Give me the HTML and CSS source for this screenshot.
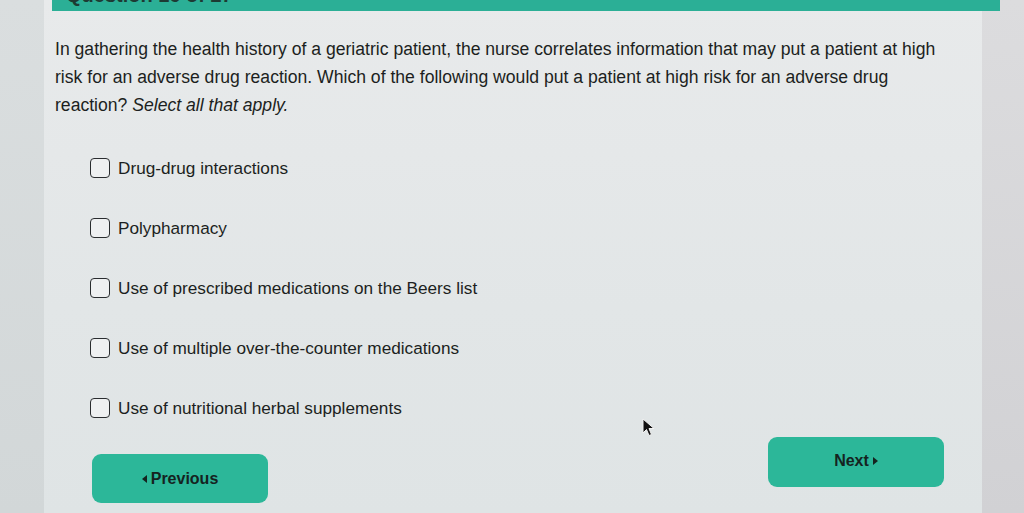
FILE: index.html
```html
<!DOCTYPE html>
<html lang="en">
<head>
<meta charset="utf-8">
<title>Question</title>
<link rel="stylesheet" href="styles.css">
</head>
<body>
<div class="screen">
  <div class="gutter gutter-left"></div>
  <main class="panel">
    <header class="topbar"><span class="topbar-title">Question 16 of 27</span></header>
    <p class="question">In gathering the health history of a geriatric patient, the nurse correlates information that may put a patient at high<br>risk for an adverse drug reaction. Which of the following would put a patient at high risk for an adverse drug<br>reaction? <em>Select all that apply.</em></p>
    <ul class="options">
      <li class="option"><span class="box"></span><span class="label">Drug-drug interactions</span></li>
      <li class="option"><span class="box"></span><span class="label">Polypharmacy</span></li>
      <li class="option"><span class="box"></span><span class="label">Use of prescribed medications on the Beers list</span></li>
      <li class="option"><span class="box"></span><span class="label">Use of multiple over-the-counter medications</span></li>
      <li class="option"><span class="box"></span><span class="label">Use of nutritional herbal supplements</span></li>
    </ul>
    <div class="nav">
      <button class="btn btn-prev"><span class="tri tri-left"></span>Previous</button>
      <button class="btn btn-next">Next<span class="tri tri-right"></span></button>
    </div>
    <svg class="cursor" width="14" height="20" viewBox="0 0 14 20"><path d="M1 1 L1 15 L4.5 11.5 L7 17.5 L9.5 16.5 L7 10.5 L12 10.5 Z" fill="#111" stroke="#f2f2f2" stroke-width="1"/></svg>
  </main>
  <div class="gutter gutter-right"></div>
</div>
</body>
</html>
```

FILE: styles.css
```css
* { box-sizing: border-box; }
html, body {
  margin: 0;
  padding: 0;
  height: 100%;
}
body {
  background: #d7dbdc;
  font-family: "Liberation Sans", Arial, Helvetica, sans-serif;
  color: #1c1f21;
  overflow: hidden;
}
.screen {
  display: flex;
  width: 1024px;
  height: 513px;
}
.gutter {
  flex: 0 0 auto;
}
.gutter-left {
  width: 44px;
  background: linear-gradient(180deg, #dadedf 0%, #d2d7d8 100%);
}
.gutter-right {
  width: 42px;
  background: linear-gradient(180deg, #dcdcde 0%, #d1d1d4 100%);
}
.panel {
  flex: 1 1 auto;
  position: relative;
  background: linear-gradient(180deg, #e8eaeb 0%, #e2e6e7 60%, #dfe4e5 100%);
  display: flex;
  flex-direction: column;
}
.topbar {
  height: 11px;
  margin-left: 8px;
  margin-right: -18px;
  background: #2baf96;
  overflow: hidden;
  padding-left: 14px;
}
.topbar-title {
  display: block;
  margin-top: -15px;
  font-size: 20px;
  font-weight: bold;
  line-height: 20px;
  color: #1d3a33;
}
.question {
  margin: 24px 0 0 0;
  padding-left: 11px;
  font-size: 17.6px;
  line-height: 28px;
  color: #1c1f21;
  white-space: nowrap;
}
.question em {
  font-style: italic;
}
.options {
  list-style: none;
  margin: 39px 0 0 0;
  padding: 0 0 0 46px;
  display: flex;
  flex-direction: column;
  gap: 40px;
}
.option {
  display: flex;
  align-items: center;
  gap: 8px;
  height: 20px;
}
.box {
  width: 20px;
  height: 20px;
  border: 1.6px solid #2a2d30;
  border-radius: 4px;
  background: #eef0f1;
  flex: 0 0 auto;
}
.label {
  font-size: 17.2px;
  color: #1c1f21;
}
.nav {
  display: flex;
  justify-content: space-between;
  align-items: flex-start;
  margin-top: 22px;
  padding-left: 48px;
  padding-right: 38px;
}
.btn {
  border: 0;
  border-radius: 9px;
  background: #2cb799;
  font-family: "Liberation Sans", Arial, Helvetica, sans-serif;
  font-weight: bold;
  font-size: 16px;
  color: #15231f;
  width: 176px;
  height: 49px;
  display: flex;
  align-items: center;
  justify-content: center;
  gap: 4px;
}
.btn-prev {
  margin-top: 14px;
}
.btn-next {
  height: 50px;
  margin-top: -3px;
  padding-bottom: 4px;
}
.tri {
  width: 0;
  height: 0;
  border-top: 4px solid transparent;
  border-bottom: 4px solid transparent;
}
.tri-left {
  border-right: 5px solid #15231f;
}
.tri-right {
  border-left: 5px solid #15231f;
}
.cursor {
  position: absolute;
  left: 598px;
  top: 418px;
}
```
